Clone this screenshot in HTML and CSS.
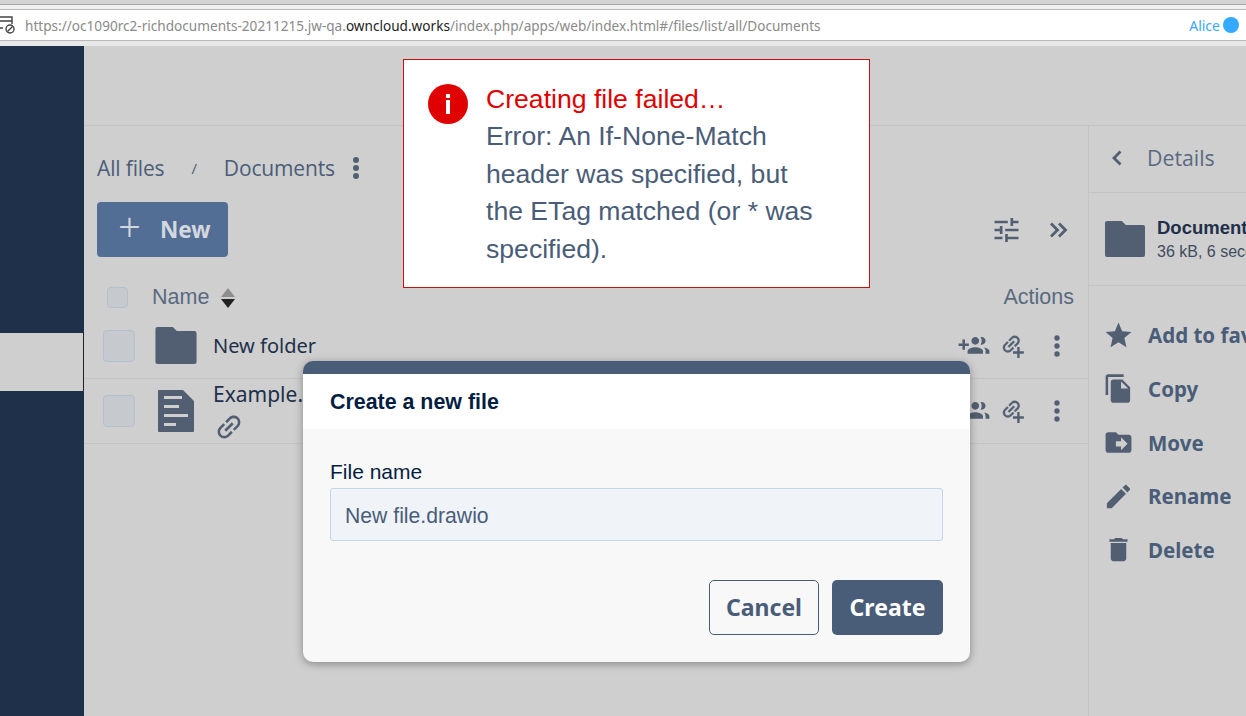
FILE: index.html
```html
<!DOCTYPE html>
<html lang="en">

<head>
  <meta charset="UTF-8">
  <title>Documents - ownCloud</title>
  <link rel="stylesheet" href="styles.css">
</head>

<body>
  <div class="browser-top"></div>
  <div class="url-bar">
    <svg class="site-icon" viewBox="0 0 16 18">
      <path d="M-2 1h14v4h-14M12 1v7M-2 5h14M-2 12h5" fill="none" stroke="#444" stroke-width="1.4" />
      <circle cx="10" cy="13" r="4" fill="none" stroke="#444" stroke-width="1.4" />
      <path d="M7.5 15.5l5-5" stroke="#444" stroke-width="1.4" />
    </svg>
    <div class="url">https://oc1090rc2-richdocuments-20211215.jw-qa.<b>owncloud.works</b>/index.php/apps/web/index.html#/files/list/all/Documents</div>
    <div class="user">Alice<span class="user-dot"></span></div>
  </div>
  <div class="browser-gap"></div>

  <div class="app">
    <nav class="sidebar">
      <div class="nav-active"></div>
    </nav>

    <div class="content">
      <header class="topbar"></header>

      <div class="panes">
        <main class="files">
          <div class="crumbs">
            <span>All files</span>
            <span class="crumb-sep">/</span>
            <span>Documents</span>
            <svg class="dots crumb-dots" viewBox="0 0 6 22"><circle cx="3" cy="3" r="3" /><circle cx="3" cy="11" r="3" /><circle cx="3" cy="19" r="3" /></svg>
          </div>

          <div class="toolbar">
            <button class="btn-new"><span class="plus">+</span>New</button>
            <div class="toolbar-right">
              <svg class="ico-tune" viewBox="3 3 18 18"><path d="M3 17v2h6v-2H3zM3 5v2h10V5H3zm10 16v-2h8v-2h-8v-2h-2v6h2zM7 9v2H3v2h4v2h2V9H7zm14 4v-2H11v2h10zm-6-4h2V7h4V5h-4V3h-2v6z" /></svg>
              <svg class="ico-chev" viewBox="0 0 18 16"><path d="M1.5 1.500l6.500 6.500-6.500 6.500M9.500 1.500l6.500 6.500-6.500 6.500" fill="none" stroke-width="2.800" /></svg>
            </div>
          </div>

          <div class="table-head">
            <span class="check check-small"></span>
            <span class="head-name">Name</span>
            <span class="sort"><i class="sort-up"></i><i class="sort-down"></i></span>
            <span class="head-actions">Actions</span>
          </div>

          <div class="row row-one">
            <span class="check"></span>
            <svg class="ico-folder" viewBox="2 3 20 18"><path d="M12.414 5H21a1 1 0 0 1 1 1v14a1 1 0 0 1-1 1H3a1 1 0 0 1-1-1V4a1 1 0 0 1 1-1h7.414l2 2z" /></svg>
            <div class="row-name">New folder</div>
            <div class="row-actions">
              <svg class="ico-share" viewBox="0 5 24 14"><path d="M8 10H5V7H3v3H0v2h3v3h2v-3h3v-2zm10 1c1.660 0 2.990-1.340 2.990-3S19.660 5 18 5c-.32 0-.63.05-.91.14.57.81.9 1.790.9 2.860s-.34 2.040-.9 2.860c.28.09.59.14.91.14zm-5 0c1.660 0 2.990-1.340 2.990-3S14.660 5 13 5s-3 1.340-3 3 1.340 3 3 3zm6.620 2.160c.83.73 1.380 1.660 1.380 2.840v2h3v-2c0-1.540-2.370-2.490-4.380-2.840zM13 13c-2 0-6 1-6 3v2h12v-2c0-2-4-3-6-3z" /></svg>
              <svg class="ico-linkadd" viewBox="0 0 24 24"><g transform="rotate(-45 10 11) scale(.9)"><path d="M3.900 12c0-1.710 1.390-3.100 3.100-3.100h4V7H7c-2.760 0-5 2.240-5 5s2.240 5 5 5h4v-1.900H7c-1.710 0-3.100-1.390-3.100-3.100zM8 13h8v-2H8v2zm9-6h-4v1.900h4c1.710 0 3.100 1.390 3.100 3.100s-1.390 3.100-3.100 3.100h-4V17h4c2.760 0 5-2.240 5-5s-2.240-5-5-5z" stroke="#525f72" stroke-width=".4" /></g><path d="M17 13v10M12 18h10" fill="none" stroke="#525f72" stroke-width="2.200" /></svg>
              <svg class="dots" viewBox="0 0 6 22"><circle cx="3" cy="3" r="2.700" /><circle cx="3" cy="11" r="2.700" /><circle cx="3" cy="19" r="2.700" /></svg>
            </div>
          </div>

          <div class="row row-two">
            <span class="check"></span>
            <svg class="ico-doc" viewBox="0 0 36 42"><path fill-rule="evenodd" d="M0 1a1 1 0 0 1 1-1h24l11 11v30a1 1 0 0 1-1 1H1a1 1 0 0 1-1-1zM6 6v3h18V6zM6 15v3h15v-3zM6 24v3h24v-3zM6 33v3h12v-3z" /></svg>
            <div class="row-name">Example.odt
              <svg class="ico-link" viewBox="0 0 24 24"><path transform="rotate(-45 12 12)" d="M3.900 12c0-1.710 1.390-3.100 3.100-3.100h4V7H7c-2.760 0-5 2.240-5 5s2.240 5 5 5h4v-1.900H7c-1.710 0-3.100-1.390-3.100-3.100zM8 13h8v-2H8v2zm9-6h-4v1.900h4c1.710 0 3.100 1.390 3.100 3.100s-1.390 3.100-3.100 3.100h-4V17h4c2.760 0 5-2.240 5-5s-2.240-5-5-5z" /></svg>
            </div>
            <div class="row-actions">
              <svg class="ico-share" viewBox="0 5 24 14"><path d="M8 10H5V7H3v3H0v2h3v3h2v-3h3v-2zm10 1c1.660 0 2.990-1.340 2.990-3S19.660 5 18 5c-.32 0-.63.05-.91.14.57.81.9 1.790.9 2.860s-.34 2.040-.9 2.860c.28.09.59.14.91.14zm-5 0c1.660 0 2.990-1.340 2.990-3S14.660 5 13 5s-3 1.340-3 3 1.340 3 3 3zm6.620 2.160c.83.73 1.380 1.660 1.380 2.840v2h3v-2c0-1.540-2.370-2.490-4.380-2.840zM13 13c-2 0-6 1-6 3v2h12v-2c0-2-4-3-6-3z" /></svg>
              <svg class="ico-linkadd" viewBox="0 0 24 24"><g transform="rotate(-45 10 11) scale(.9)"><path d="M3.900 12c0-1.710 1.390-3.100 3.100-3.100h4V7H7c-2.760 0-5 2.240-5 5s2.240 5 5 5h4v-1.900H7c-1.710 0-3.100-1.390-3.100-3.100zM8 13h8v-2H8v2zm9-6h-4v1.900h4c1.710 0 3.100 1.390 3.100 3.100s-1.390 3.100-3.100 3.100h-4V17h4c2.760 0 5-2.240 5-5s-2.240-5-5-5z" stroke="#525f72" stroke-width=".4" /></g><path d="M17 13v10M12 18h10" fill="none" stroke="#525f72" stroke-width="2.200" /></svg>
              <svg class="dots" viewBox="0 0 6 22"><circle cx="3" cy="3" r="2.700" /><circle cx="3" cy="11" r="2.700" /><circle cx="3" cy="19" r="2.700" /></svg>
            </div>
          </div>
        </main>

        <aside class="details">
          <div class="details-head">
            <svg class="ico-back" viewBox="0 0 10 16"><path d="M8.500 1.500l-6.500 6.500 6.500 6.500" fill="none" stroke-width="2.800" /></svg>
            <span>Details</span>
          </div>
          <div class="details-file">
            <svg class="ico-folder" viewBox="2 3 20 18"><path d="M12.414 5H21a1 1 0 0 1 1 1v14a1 1 0 0 1-1 1H3a1 1 0 0 1-1-1V4a1 1 0 0 1 1-1h7.414l2 2z" /></svg>
            <div>
              <div class="file-title">Documents</div>
              <div class="file-meta">36 kB, 6 seconds ago</div>
            </div>
          </div>
          <ul class="details-actions">
            <li><svg viewBox="0 0 24 24"><path d="M12 17.270L18.180 21l-1.640-7.030L22 9.240l-7.190-.61L12 2 9.190 8.630 2 9.240l5.460 4.730L5.820 21z" /></svg>Add to favorites</li>
            <li><svg viewBox="0 0 24 24"><path d="M16 1H4c-1.100 0-2 .9-2 2v14h2V3h12V1zm-1 4l6 6v10c0 1.100-.9 2-2 2H7.990C6.890 23 6 22.100 6 21l.01-14c0-1.100.89-2 1.990-2h7zm-1 7h5.500L14 6.500V12z" /></svg>Copy</li>
            <li><svg viewBox="0 0 24 24"><path d="M20 6h-8l-2-2H4c-1.100 0-1.990.9-1.990 2L2 18c0 1.100.9 2 2 2h16c1.100 0 2-.9 2-2V8c0-1.100-.9-2-2-2zm-6 12v-3h-4v-4h4V8l5 5-5 5z" /></svg>Move</li>
            <li><svg viewBox="0 0 24 24"><path d="M3 17.250V21h3.750L17.810 9.940l-3.750-3.750L3 17.250zM20.710 7.040c.39-.39.39-1.020 0-1.410l-2.340-2.340c-.39-.39-1.020-.39-1.410 0l-1.830 1.830 3.750 3.750 1.830-1.830z" /></svg>Rename</li>
            <li><svg viewBox="0 0 24 24"><path d="M6 19c0 1.100.9 2 2 2h8c1.100 0 2-.9 2-2V7H6v12zM19 4h-3.500l-1-1h-5l-1 1H5v2h14V4z" /></svg>Delete</li>
          </ul>
        </aside>
      </div>
    </div>
  </div>

  <div class="notice">
    <svg class="notice-icon" viewBox="0 0 40 40">
      <circle cx="20" cy="20" r="20" fill="#e00000" />
      <rect x="18" y="10" width="4" height="4" fill="#fff" />
      <rect x="18" y="16" width="4" height="14" fill="#fff" />
    </svg>
    <div>
      <div class="notice-title">Creating file failed…</div>
      <div class="notice-text">Error: An If-None-Match header was specified, but the ETag matched (or * was specified).</div>
    </div>
  </div>

  <div class="modal">
    <h2 class="modal-title">Create a new file</h2>
    <div class="modal-body">
      <label class="field-label">File name</label>
      <div class="field">New file.drawio</div>
      <div class="modal-buttons">
        <button class="btn-cancel">Cancel</button>
        <button class="btn-create">Create</button>
      </div>
    </div>
  </div>
</body>

</html>
```

FILE: styles.css
```css
* {
  box-sizing: border-box;
}

html,
body {
  height: 100%;
}

body {
  margin: 0;
  overflow: hidden;
  display: flex;
  flex-direction: column;
  background: #cfcfcf;
  font-family: "Liberation Sans", sans-serif;
  color: #4a5d78;
}

svg {
  fill: #525f72;
  stroke: #525f72;
  stroke-width: 0;
  flex: none;
}

/* browser chrome */
.browser-top {
  height: 10px;
  background: #f0f0f0;
  border-top: 4px solid #d4d4d4;
  border-bottom: 1px solid #b8b8b8;
  box-shadow: inset 0 1px 0 #a8a8a8;
}

.url-bar {
  height: 31px;
  background: #fff;
  border-bottom: 1px solid #b8b8b8;
  display: flex;
  align-items: center;
  font-family: "Noto Sans", sans-serif;
  font-size: 13.6px;
  color: #8a8a8a;
  white-space: nowrap;
}

.site-icon {
  width: 16px;
  height: 18px;
  margin-left: 0;
  fill: none;
}

.url {
  margin-left: 9px;
  flex: 1;
}

.url b {
  font-weight: 400;
  color: #222;
}

.user {
  display: flex;
  align-items: center;
  gap: 3px;
  margin-right: 7px;
  font-size: 14px;
  color: #3aa8ff;
}

.user-dot {
  width: 16px;
  height: 16px;
  border-radius: 50%;
  background: #33a9ff;
}

.browser-gap {
  height: 5px;
  background: #e8e8e8;
}

/* app shell */
.app {
  flex: 1;
  display: flex;
  min-height: 0;
}

.sidebar {
  width: 84px;
  background: #1f304b;
  padding-top: 287px;
}

.nav-active {
  height: 58px;
  background: #cfcfcf;
  border-right: 1px solid #222;
}

.content {
  flex: 1;
  min-width: 0;
  display: flex;
  flex-direction: column;
}

.topbar {
  height: 80px;
  border-bottom: 1px solid #c4c4c4;
}

.panes {
  flex: 1;
  display: flex;
}

.files {
  flex: 1;
  min-width: 0;
}

/* breadcrumb + toolbar */
.crumbs {
  height: 76px;
  padding: 8px 0 0 13px;
  display: flex;
  align-items: center;
  font-family: "Open Sans", sans-serif;
  font-size: 21px;
  letter-spacing: -.15px;
}

.crumb-sep {
  margin: 0 27px;
  font-size: 15px;
}

.dots {
  width: 6px;
  height: 22px;
}

.crumb-dots {
  margin-left: 18px;
}

.toolbar {
  height: 55px;
  padding-left: 13px;
  display: flex;
  align-items: center;
  justify-content: space-between;
}

.btn-new {
  width: 131px;
  height: 55px;
  border: 0;
  border-radius: 4px;
  background: #526e95;
  color: #d4d8de;
  font-family: "Noto Sans", sans-serif;
  font-size: 22.500px;
  font-weight: 700;
  display: flex;
  align-items: center;
  padding: 0 0 0 21px;
}

.plus {
  font-size: 40px;
  font-weight: 300;
  width: 42px;
  text-align: left;
  line-height: 1;
  margin-top: -5px;
}

.toolbar-right {
  display: flex;
  align-items: center;
  gap: 30px;
  padding-right: 20px;
}

.ico-tune {
  width: 25px;
  height: 24px;
}

.ico-chev {
  width: 19px;
  height: 16px;
  fill: none;
  stroke-width: 1;
}

/* table */
.table-head {
  height: 56px;
  padding: 25px 14px 0 23px;
  display: flex;
  align-items: center;
  font-size: 21.500px;
  color: #5a6a80;
}

.check {
  width: 32px;
  height: 32px;
  border: 1px solid #b4c0d0;
  border-radius: 4px;
  background: #c6c9ce;
  flex: none;
}

.check-small {
  width: 21px;
  height: 21px;
}

.head-name {
  margin-left: 24px;
}

.sort {
  margin-left: 12px;
  display: flex;
  flex-direction: column;
  gap: 2px;
}

.sort i {
  display: block;
  width: 0;
  height: 0;
  border-left: 7px solid transparent;
  border-right: 7px solid transparent;
}

.sort-up {
  border-bottom: 9px solid #8e8e8e;
}

.sort-down {
  border-top: 9px solid #222;
}

.head-actions {
  margin-left: auto;
}

.row {
  display: flex;
  align-items: center;
  padding: 0 28px 0 19px;
  border-bottom: 1px solid #c4c4c4;
  position: relative;
}

.row-one {
  height: 66px;
}

.row-two {
  height: 65px;
}

.row-name {
  font-family: "Noto Sans", sans-serif;
  font-size: 20px;
  color: #1f304b;
  white-space: nowrap;
}

.row-one .row-name {
  margin-top: -1px;
}

.row-one .ico-folder {
  width: 42px;
  height: 37px;
  margin: 0 16px 0 20px;
}

.ico-doc {
  width: 36px;
  height: 42px;
  margin: 0 19px 0 23px;
}

.row-two .row-name {
  align-self: flex-start;
  padding-top: 1px;
  font-size: 21px;
}

.ico-link {
  display: block;
  width: 32px;
  height: 32px;
  margin: 3px 0 0 0;
}

.row-actions {
  margin-left: auto;
  display: flex;
  align-items: center;
}

.ico-share {
  width: 32px;
  height: 18px;
}

.ico-linkadd {
  width: 26px;
  height: 26px;
  margin: 0 28px 0 10px;
}

/* right sidebar */
.details {
  width: 158px;
  border-left: 1px solid #c4c4c4;
  overflow: hidden;
  white-space: nowrap;
}

.details-head {
  height: 67px;
  padding: 0 0 3px 23px;
  display: flex;
  align-items: center;
  gap: 25px;
  border-bottom: 1px solid #c4c4c4;
  font-family: "Open Sans", sans-serif;
  font-size: 21.300px;
  color: #5a6a80;
}

.ico-back {
  width: 10px;
  height: 16px;
  fill: none;
  stroke-width: 1;
}

.details-file {
  height: 93px;
  padding-left: 15px;
  display: flex;
  align-items: center;
  gap: 11px;
  border-bottom: 1px solid #c4c4c4;
}

.details-file .ico-folder {
  width: 42px;
  height: 36px;
}

.file-title {
  font-weight: 700;
  font-size: 18.500px;
  color: #1f304b;
  margin-bottom: 4px;
}

.file-meta {
  font-size: 16px;
  color: #3f4c60;
}

.details-actions {
  list-style: none;
  margin: 0;
  padding: 22.300px 0 0 13.500px;
}

.details-actions li {
  height: 53.700px;
  display: flex;
  align-items: center;
  gap: 14.500px;
  font-family: "Noto Sans", sans-serif;
  font-size: 20.500px;
  font-weight: 700;
}

.details-actions svg {
  width: 31px;
  height: 31px;
}

/* error notification */
.notice {
  position: absolute;
  left: 403px;
  top: 59px;
  width: 467px;
  height: 229px;
  padding: 21px 40px 0 24px;
  display: flex;
  gap: 18px;
  background: #fff;
  border: 1px solid #c81010;
  font-size: 26.600px;
  line-height: 37.400px;
}

.notice-icon {
  width: 40px;
  height: 40px;
  margin-top: 3px;
  fill: none;
}

.notice-title {
  color: #e00000;
}

/* create dialog */
.modal {
  position: absolute;
  left: 303px;
  top: 361px;
  width: 667px;
  height: 301px;
  border-radius: 10px;
  border-top: 13px solid #4a5d78;
  background: #f8f8f8;
  box-shadow: 0 2px 8px rgba(0, 0, 0, .35);
  overflow: hidden;
}

.modal-title {
  margin: 0;
  height: 55px;
  padding: 2px 0 0 27px;
  display: flex;
  align-items: center;
  background: #fff;
  font-size: 21.400px;
  font-weight: 700;
  color: #041e42;
}

.modal-body {
  padding: 30px 27px 0;
}

.field-label {
  display: block;
  font-size: 21px;
  line-height: 26px;
  color: #041e42;
}

.field {
  height: 53px;
  margin-top: 3px;
  padding: 2px 0 0 14px;
  display: flex;
  align-items: center;
  background: #f0f4f9;
  border: 1px solid #c3d6ec;
  border-radius: 3px;
  font-size: 21.200px;
}

.modal-buttons {
  margin-top: 39px;
  display: flex;
  justify-content: flex-end;
  gap: 13px;
}

.modal-buttons button {
  height: 55px;
  padding-bottom: 2px;
  border-radius: 5px;
  font-family: "Noto Sans", sans-serif;
  font-size: 23px;
  font-weight: 700;
}

.btn-cancel {
  width: 110px;
  border: 1px solid #4a5d78;
  background: transparent;
  color: #4a5d78;
}

.btn-create {
  width: 111px;
  border: 0;
  background: #4a5d78;
  color: #fff;
}
```
